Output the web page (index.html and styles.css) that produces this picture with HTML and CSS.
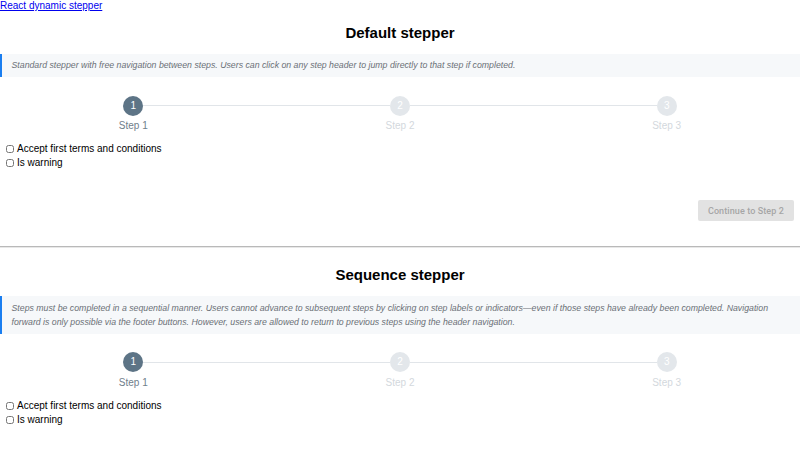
FILE: index.html
```html
<!DOCTYPE html>
<html lang="en">
<head>
<meta charset="utf-8">
<title>React dynamic stepper</title>
<link rel="stylesheet" href="styles.css">
</head>
<body>
<a class="top-link" href="#">React dynamic stepper</a>

<section class="demo">
  <h2 class="demo-title">Default stepper</h2>
  <p class="info">Standard stepper with free navigation between steps. Users can click on any step header to jump directly to that step if completed.</p>
  <div class="stepper">
    <div class="track">
      <span class="pad"></span>
      <span class="dot active">1</span>
      <span class="line"></span>
      <span class="dot">2</span>
      <span class="line"></span>
      <span class="dot">3</span>
      <span class="pad"></span>
    </div>
    <div class="labels">
      <span class="label active">Step 1</span>
      <span class="label">Step 2</span>
      <span class="label">Step 3</span>
    </div>
  </div>
  <div class="checks">
    <label class="check"><input type="checkbox">Accept first terms and conditions</label>
    <label class="check"><input type="checkbox">Is warning</label>
  </div>
  <div class="footer">
    <button class="btn" disabled>Continue to Step 2</button>
  </div>
</section>

<hr class="divider">

<section class="demo">
  <h2 class="demo-title">Sequence stepper</h2>
  <p class="info">Steps must be completed in a sequential manner. Users cannot advance to subsequent steps by clicking on step labels or indicators—even if those steps have already been completed. Navigation forward is only possible via the footer buttons. However, users are allowed to return to previous steps using the header navigation.</p>
  <div class="stepper">
    <div class="track">
      <span class="pad"></span>
      <span class="dot active">1</span>
      <span class="line"></span>
      <span class="dot">2</span>
      <span class="line"></span>
      <span class="dot">3</span>
      <span class="pad"></span>
    </div>
    <div class="labels">
      <span class="label active">Step 1</span>
      <span class="label">Step 2</span>
      <span class="label">Step 3</span>
    </div>
  </div>
  <div class="checks">
    <label class="check"><input type="checkbox">Accept first terms and conditions</label>
    <label class="check"><input type="checkbox">Is warning</label>
  </div>
  <div class="footer">
    <button class="btn" disabled>Continue to Step 2</button>
  </div>
</section>
</body>
</html>
```

FILE: styles.css
```css
html, body {
  margin: 0;
  padding: 0;
  background: #ffffff;
}
body {
  font-family: "Liberation Sans", Arial, sans-serif;
  font-size: 10px;
  line-height: 11.5px;
  color: #000;
}
.top-link {
  color: #0000ee;
  text-decoration: underline;
}
.demo {
  display: flow-root;
}
.demo-title {
  margin: 12.4px 0;
  font-size: 15px;
  line-height: 17.25px;
  font-weight: bold;
  text-align: center;
}
.info {
  margin: 0;
  padding: 4.75px 9px 4.75px 9.5px;
  border-left: 2.5px solid #1a7ef0;
  background: #f6f8fa;
  color: #6b7077;
  font-style: italic;
  font-size: 8.75px;
  line-height: 14px;
}
.stepper {
  margin-top: 18.5px;
}
.track {
  display: flex;
  align-items: center;
  height: 20px;
}
.pad {
  flex: 1;
}
.line {
  flex: 2;
  height: 1px;
  background: #e1e5e9;
}
.dot {
  width: 20px;
  height: 20px;
  border-radius: 50%;
  background: #e3e7eb;
  color: #ffffff;
  font-size: 10px;
  display: flex;
  align-items: center;
  justify-content: center;
}
.dot.active {
  background: #5d7486;
}
.labels {
  display: grid;
  grid-template-columns: repeat(3, 1fr);
  margin-top: 4.75px;
}
.label {
  text-align: center;
  color: #d3d8dd;
  font-size: 10px;
  line-height: 11.5px;
}
.label.active {
  color: #6f7e8b;
}
.checks {
  margin-top: 10.25px;
  display: flex;
  flex-direction: column;
}
.check {
  display: flex;
  align-items: center;
  height: 14px;
  font-size: 10px;
}
.check input {
  width: 8px;
  height: 8px;
  margin: 0 3px 0 6px;
}
.footer {
  display: flex;
  justify-content: flex-end;
  padding: 30px 6px 20px 0;
}
.btn {
  font-family: Roboto, "Liberation Sans", sans-serif;
  font-size: 9px;
  font-weight: 500;
  height: 21px;
  padding: 0 10px;
  border: none;
  border-radius: 2px;
  background: #e2e2e2;
  color: #a6a6a6;
  letter-spacing: 0.1px;
}
.divider {
  margin: 5px 0 6px;
  height: 0;
  border: none;
  border-top: 1px solid #b9b9b9;
  border-bottom: 1px solid #e8e8e8;
}
```
